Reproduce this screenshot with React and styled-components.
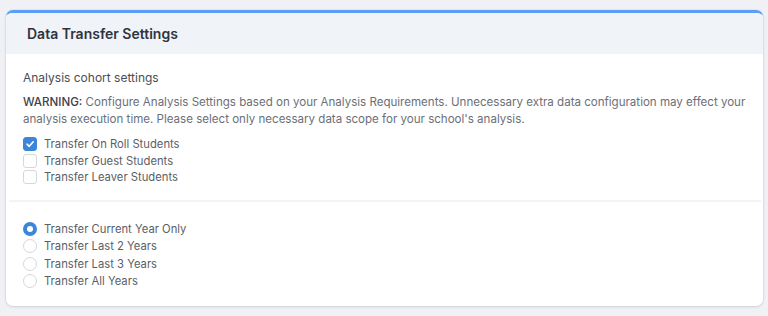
import React, { useState } from "react";
import styled, { createGlobalStyle } from "styled-components";

const GlobalStyle = createGlobalStyle`
  html, body {
    margin: 0;
    padding: 0;
    background: #eff1f5;
    font-family: Inter, "Noto Sans", "Liberation Sans", sans-serif;
  }
`;

const Page = styled.div`
  padding: 10px 5px 10px 6px;
`;

const Card = styled.div`
  background: #fff;
  border-top: 3px solid #5c9ef5;
  border-radius: 7px;
  box-shadow: 0 1px 3px rgba(30, 40, 60, 0.12), 0 0 0 1px rgba(30, 40, 60, 0.04);
  overflow: hidden;
`;

const Header = styled.div`
  background: #f0f3f8;
  height: 41px;
  display: flex;
  align-items: center;
  padding: 0 21px;
`;

const Title = styled.h2`
  margin: 0;
  font-size: 14px;
  font-weight: 600;
  color: #2f3340;
`;

const Body = styled.div`
  padding: 16px 8px 16px 17px;
`;

const Label = styled.div`
  font-size: 12px;
  line-height: 16px;
  color: #4a4d55;
`;

const Warning = styled.p`
  margin: 8px 0 8px;
  font-size: 11.55px;
  line-height: 17px;
  color: #6c6f78;

  strong {
    font-weight: 500;
    color: #3f424a;
  }
`;

const OptionList = styled.div`
  display: flex;
  flex-direction: column;
`;

const Option = styled.label`
  display: flex;
  align-items: center;
  gap: 7px;
  height: ${(p) => (p.$tall ? "17.3px" : "16.5px")};
  font-size: 11.25px;
  color: #5b5e66;
  cursor: pointer;
`;

const Box = styled.span`
  width: 14px;
  height: 14px;
  box-sizing: border-box;
  border-radius: 3px;
  border: 1px solid ${(p) => (p.$on ? "#3b86d8" : "#d4d7dc")};
  background: ${(p) => (p.$on ? "#3b86d8" : "#fff")};
  display: flex;
  align-items: center;
  justify-content: center;
  flex-shrink: 0;
`;

const Radio = styled.span`
  width: 14px;
  height: 14px;
  box-sizing: border-box;
  border-radius: 50%;
  border: ${(p) => (p.$on ? "4px solid #3b86d8" : "1px solid #d4d7dc")};
  background: #fff;
  flex-shrink: 0;
`;

const Divider = styled.hr`
  border: none;
  height: 2px;
  background: #f3f4f6;
  margin: 14px -6px 19px -14px;
`;

const cohorts = [
  "Transfer On Roll Students",
  "Transfer Guest Students",
  "Transfer Leaver Students",
];

const years = [
  "Transfer Current Year Only",
  "Transfer Last 2 Years",
  "Transfer Last 3 Years",
  "Transfer All Years",
];

export default function App() {
  const [checked, setChecked] = useState([true, false, false]);
  const [year, setYear] = useState(0);

  return (
    <Page>
      <GlobalStyle />
      <Card>
        <Header>
          <Title>Data Transfer Settings</Title>
        </Header>
        <Body>
          <Label>Analysis cohort settings</Label>
          <Warning>
            <strong>WARNING:</strong> Configure Analysis Settings based on your Analysis
            Requirements. Unnecessary extra data configuration may effect your
            analysis execution time. Please select only necessary data scope for your
            school's analysis.
          </Warning>
          <OptionList>
            {cohorts.map((c, i) => (
              <Option
                key={c}
                onClick={() =>
                  setChecked(checked.map((v, j) => (j === i ? !v : v)))
                }
              >
                <Box $on={checked[i]}>
                  {checked[i] && (
                    <svg width="10" height="10" viewBox="0 0 10 10">
                      <path
                        d="M2 5.2 L4.2 7.3 L8.2 2.8"
                        fill="none"
                        stroke="#fff"
                        strokeWidth="1.6"
                        strokeLinecap="round"
                        strokeLinejoin="round"
                      />
                    </svg>
                  )}
                </Box>
                {c}
              </Option>
            ))}
          </OptionList>
          <Divider />
          <OptionList>
            {years.map((y, i) => (
              <Option key={y} $tall onClick={() => setYear(i)}>
                <Radio $on={year === i} />
                {y}
              </Option>
            ))}
          </OptionList>
        </Body>
      </Card>
    </Page>
  );
}
